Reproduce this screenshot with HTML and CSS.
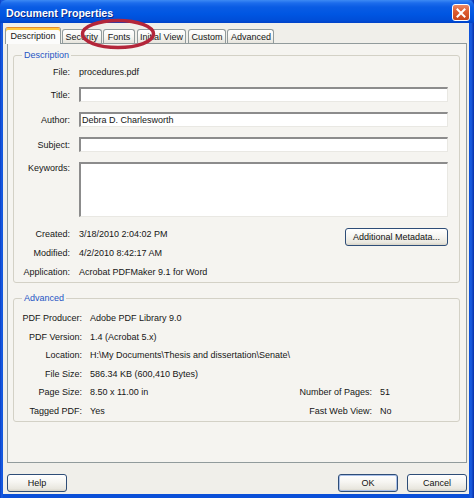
FILE: index.html
```html
<!DOCTYPE html>
<html>
<head>
<meta charset="utf-8">
<link rel="stylesheet" href="styles.css">
</head>
<body>
<div class="window">
  <div class="titlebar">
    <span class="title">Document Properties</span>
    <span class="close"><svg width="10" height="10" viewBox="0 0 10 10"><path d="M1.5 1.5 L8.5 8.5 M8.5 1.5 L1.5 8.5" stroke="#fff" stroke-width="2" stroke-linecap="square"/></svg></span>
  </div>
  <div class="client">
    <div class="tabs">
      <div class="tab active">Description</div>
      <div class="tab">Security</div>
      <div class="tab">Fonts</div>
      <div class="tab">Initial View</div>
      <div class="tab">Custom</div>
      <div class="tab">Advanced</div>
    </div>
    <div class="panel">
      <fieldset class="group desc">
        <legend>Description</legend>
        <div class="fields">
          <span class="lbl">File:</span><span class="val">procedures.pdf</span>
          <span class="lbl">Title:</span><div class="input"></div>
          <span class="lbl">Author:</span><div class="input">Debra D. Charlesworth</div>
          <span class="lbl">Subject:</span><div class="input"></div>
          <span class="lbl top">Keywords:</span><div class="input tall"></div>
        </div>
        <div class="meta">
          <span class="lbl">Created:</span><span class="val">3/18/2010 2:04:02 PM</span>
          <button class="btn meta-btn">Additional Metadata...</button>
          <span class="lbl">Modified:</span><span class="val">4/2/2010 8:42:17 AM</span>
          <span class="lbl">Application:</span><span class="val">Acrobat PDFMaker 9.1 for Word</span>
        </div>
      </fieldset>
      <fieldset class="group adv">
        <legend>Advanced</legend>
        <div class="adv-grid">
          <span class="lbl">PDF Producer:</span><span class="val wide">Adobe PDF Library 9.0</span>
          <span class="lbl">PDF Version:</span><span class="val wide">1.4 (Acrobat 5.x)</span>
          <span class="lbl">Location:</span><span class="val wide">H:\My Documents\Thesis and dissertation\Senate\</span>
          <span class="lbl">File Size:</span><span class="val wide">586.34 KB (600,410 Bytes)</span>
          <span class="lbl">Page Size:</span><span class="val">8.50 x 11.00 in</span><span class="lbl">Number of Pages:</span><span class="val">51</span>
          <span class="lbl">Tagged PDF:</span><span class="val">Yes</span><span class="lbl">Fast Web View:</span><span class="val">No</span>
        </div>
      </fieldset>
    </div>
    <div class="buttons">
      <button class="btn dlg">Help</button>
      <div class="right">
        <button class="btn dlg default">OK</button>
        <button class="btn dlg">Cancel</button>
      </div>
    </div>
  </div>
  <svg class="mark" width="80" height="34" viewBox="0 0 80 34"><ellipse cx="38" cy="16" rx="35.5" ry="13.5" fill="none" stroke="#B3263A" stroke-width="3.5"/></svg>
</div>
</body>
</html>
```

FILE: styles.css
```css
html, body {
  margin: 0;
  padding: 0;
}
body {
  font-family: "Liberation Sans", Arial, sans-serif;
  font-size: 9px;
  color: #161616;
  background: #fff;
}
.window {
  position: relative;
  width: 474px;
  height: 498px;
  display: flex;
  flex-direction: column;
  background: linear-gradient(90deg, #0a3fc4 0, #1a5fe6 2px, #0a4fd8 3px, #0a4fd8 469px, #1c5ee2 471px, #062fa8 474px);
  overflow: hidden;
}
.titlebar {
  height: 23px;
  flex: none;
  display: flex;
  align-items: center;
  padding: 0 4px 0 6px;
  background: linear-gradient(180deg, #3d8af4 0, #1c6cec 3px, #0a5ce4 7px, #0056e2 14px, #004ed8 20px, #0042c8 23px);
  border-radius: 6px 6px 0 0;
}
.title {
  flex: 1;
  color: #fff;
  font-weight: bold;
  font-size: 10.6px;
  padding-top: 2px;
  text-shadow: 1px 1px 0 #0a2a8a;
}
.close {
  width: 18px;
  height: 17px;
  margin-top: 2px;
  box-sizing: border-box;
  border: 1px solid #fff;
  border-radius: 3px;
  background: linear-gradient(180deg, #ec8a66 0, #de5f33 40%, #c8441a 100%);
  display: flex;
  align-items: center;
  justify-content: center;
}
.client {
  flex: 1;
  margin: 0 5px 4px 3px;
  padding: 4px 2px 0 4px;
  background: #f0efea;
  display: flex;
  flex-direction: column;
}
.tabs {
  height: 16px;
  display: flex;
  align-items: flex-end;
  flex: none;
}
.tab {
  height: 14px;
  box-sizing: border-box;
  min-width: 32px;
  padding: 0 2.5px;
  margin-right: 1.5px;
  border: 1px solid #919b9c;
  border-bottom: none;
  border-radius: 3px 3px 0 0;
  background: linear-gradient(180deg, #ffffff 0, #f7f7f4 50%, #e6e4dc 100%);
  display: flex;
  align-items: center;
  justify-content: center;
  white-space: nowrap;
}
.tab.active {
  position: relative;
  z-index: 1;
  height: 17px;
  margin: 0 1px -1px -2px;
  padding: 0 4.5px;
  background: #fcfcfb;
  border-top: 1px solid #e68b2c;
  box-shadow: inset 0 2px 0 #ffc83c;
}
.panel {
  height: 420px;
  box-sizing: border-box;
  flex: none;
  border: 1px solid #919b9c;
  background: #f5f4f0;
  padding: 6px 6px 0 5px;
}
.group {
  margin: 0;
  padding: 0 11px 4px 4px;
  min-width: 0;
  border: 1px solid #d3d1c6;
  border-radius: 3px;
}
.group legend {
  margin-left: 4px;
  padding: 0 2px;
  line-height: 11px;
  color: #1f55c4;
}
.fields {
  margin-top: 5px;
  display: grid;
  grid-template-columns: 52px 1fr;
  column-gap: 9px;
  row-gap: 10px;
  grid-template-rows: 11px 15px 15px 15px 55px;
}
.lbl {
  text-align: right;
  align-self: center;
  white-space: nowrap;
}
.lbl.top {
  align-self: start;
  margin-top: 1px;
}
.val {
  align-self: center;
  white-space: nowrap;
}
.input {
  box-sizing: border-box;
  background: #fff;
  border-top: 2px solid #8c8c8c;
  border-left: 2px solid #8c8c8c;
  border-right: 1px solid #e9e8e3;
  border-bottom: 1px solid #e9e8e3;
  padding-left: 1px;
  line-height: 12px;
  white-space: nowrap;
}
.meta {
  margin-top: 11px;
  display: grid;
  grid-template-columns: 52px 1fr 103px;
  grid-auto-rows: 12px;
  column-gap: 9px;
  row-gap: 7px;
}
.meta .meta-btn {
  grid-column: 3;
  grid-row: 1 / span 2;
  align-self: start;
  margin-top: 0;
}
.btn {
  font-family: "Liberation Sans", Arial, sans-serif;
  font-size: 9px;
  color: #111;
  height: 18px;
  padding: 0;
  box-sizing: border-box;
  border: 1px solid #2e4d77;
  border-radius: 3px;
  background: linear-gradient(180deg, #ffffff 0, #f6f5f1 45%, #e9e7df 85%, #d8d4c8 100%);
}
.adv {
  margin-top: 10px;
  padding: 0 11px 4px 4px;
}
.adv-grid {
  margin-top: 8px;
  display: grid;
  grid-template-columns: 64px 1fr auto 68px;
  grid-auto-rows: 12px;
  column-gap: 8px;
  row-gap: 6.5px;
}
.adv-grid .wide {
  grid-column: 2 / -1;
}
.buttons {
  margin-top: 11px;
  display: flex;
  justify-content: space-between;
  flex: none;
}
.right {
  display: flex;
  gap: 9px;
}
.btn.dlg {
  width: 60px;
}
.btn.default {
  box-shadow: inset 0 0 0 1px #a9c0e8;
}
.mark {
  position: absolute;
  left: 80px;
  top: 18px;
}
```
